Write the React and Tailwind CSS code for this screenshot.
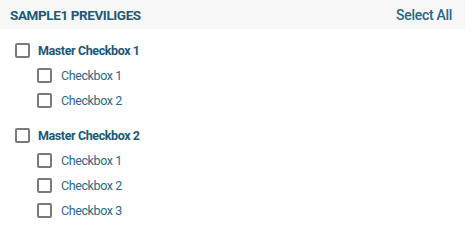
import React from "react";

const Box = () => (
  <span className="w-[15px] h-[15px] border-2 border-[#7a7a7a] rounded-[2px] bg-white shrink-0" />
);

const groups = [
  { title: "Master Checkbox 1", items: ["Checkbox 1", "Checkbox 2"] },
  { title: "Master Checkbox 2", items: ["Checkbox 1", "Checkbox 2", "Checkbox 3"] },
];

export default function App() {
  return (
    <div className="w-[474px] h-[229px] bg-white" style={{ fontFamily: "Roboto, 'Liberation Sans', sans-serif" }}>
      <div className="w-[465px] h-[29px] bg-[#f8f8f8] flex items-center justify-between pl-[10px] pr-[13px]">
        <span className="text-[13.5px] font-bold text-[#1f5876] tracking-[-0.4px] pt-[1px]">SAMPLE1 PREVILIGES</span>
        <span className="text-[14px] font-medium text-[#2a6582] tracking-[-0.3px] pt-[1px]">Select All</span>
      </div>
      <div className="pt-[9px] pl-[15px]">
        {groups.map((g, i) => (
          <div key={i} className={i > 0 ? "mt-[10px]" : ""}>
            <div className="h-[25px] flex items-center gap-[8px]">
              <Box />
              <span className="text-[12.5px] font-bold text-[#1b5773] tracking-[-0.4px] pt-[1px]">{g.title}</span>
            </div>
            {g.items.map((t) => (
              <div key={t} className="h-[25px] flex items-center gap-[9px] pl-[22px]">
                <Box />
                <span className="text-[12.5px] text-[#2b6884] tracking-[-0.4px] pt-[1px]">{t}</span>
              </div>
            ))}
          </div>
        ))}
      </div>
    </div>
  );
}
